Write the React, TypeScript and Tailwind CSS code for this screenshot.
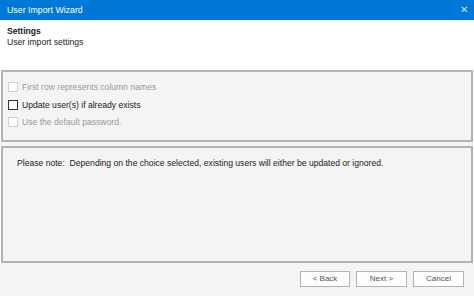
import React from "react";

function Check({ disabled }: { disabled?: boolean }) {
  return (
    <span
      className={
        "inline-block w-[10px] h-[10px] border bg-white shrink-0 " +
        (disabled ? "border-[#d0d0d0]" : "border-[#333333]")
      }
    />
  );
}

export default function App() {
  return (
    <div
      className="w-[474px] h-[296px] bg-white flex flex-col overflow-hidden text-[8.6px] text-[#1a1a1a]"
      style={{ fontFamily: '"Liberation Sans", Arial, sans-serif' }}
    >
      <div className="h-[20px] bg-[#0078d7] text-white flex items-center justify-between pl-[7px] pr-[6px] shrink-0">
        <span className="leading-none text-[8.8px]">User Import Wizard</span>
        <span className="text-[10px] leading-none text-[#cfe4f7]">✕</span>
      </div>
      <div className="h-[50px] bg-white pl-[7px] pt-[6px] shrink-0 leading-[11px]">
        <div className="font-bold">Settings</div>
        <div>User import settings</div>
      </div>
      <div className="h-[72px] mx-[1px] border-2 border-[#b4b4b4] bg-[#f4f4f4] flex flex-col pl-[5px] pt-[9px] shrink-0">
        <div className="flex items-center gap-[4px] h-[12px] text-[#9a9a9a]">
          <Check disabled />
          <span>First row represents column names</span>
        </div>
        <div className="flex items-center gap-[4px] h-[12px] mt-[6px]">
          <Check />
          <span>Update user(s) if already exists</span>
        </div>
        <div className="flex items-center gap-[4px] h-[12px] mt-[5px] text-[#9a9a9a]">
          <Check disabled />
          <span>Use the default password.</span>
        </div>
      </div>
      <div className="h-[4px] bg-[#f4f4f4] shrink-0" />
      <div className="h-[117px] mx-[1px] border-2 border-[#b4b4b4] bg-[#f4f4f4] pl-[14px] pt-[9px] shrink-0">
        <div>Please note:&nbsp; Depending on the choice selected, existing users will either be updated or ignored.</div>
      </div>
      <div className="flex-1 bg-[#f4f4f4] flex items-start justify-end gap-[6px] pr-[10px] pt-[8px]">
        <button className="w-[50px] h-[16px] border border-[#b4b4b4] bg-[#fdfdfd] text-[8px] leading-none text-[#555]">
          &lt; Back
        </button>
        <button className="w-[51px] h-[16px] border border-[#b4b4b4] bg-[#fdfdfd] text-[8px] leading-none text-[#555]">
          Next &gt;
        </button>
        <button className="w-[51px] h-[16px] border border-[#b4b4b4] bg-[#fdfdfd] text-[8px] leading-none text-[#555]">
          Cancel
        </button>
      </div>
    </div>
  );
}
